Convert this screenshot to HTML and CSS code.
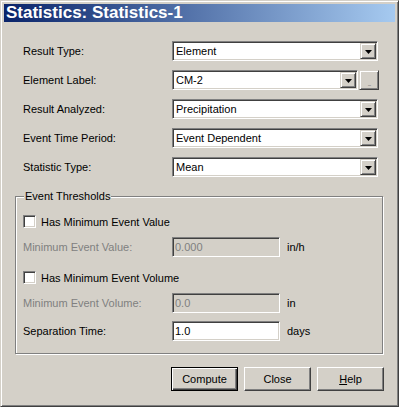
FILE: index.html
```html
<!DOCTYPE html>
<html>
<head>
<meta charset="utf-8">
<link rel="stylesheet" href="styles.css">
</head>
<body>
<div class="window">
  <div class="titlebar">Statistics: Statistics-1</div>
  <div class="form">
    <div class="row">
      <span class="label">Result Type:</span>
      <div class="combo wide"><span class="combo-text">Element</span><span class="drop"><svg width="7" height="4" viewBox="0 0 7 4"><polygon points="0,0 7,0 3.5,4" fill="#000"/></svg></span></div>
    </div>
    <div class="row">
      <span class="label">Element Label:</span>
      <div class="combo short"><span class="combo-text">CM-2</span><span class="drop"><svg width="7" height="4" viewBox="0 0 7 4"><polygon points="0,0 7,0 3.5,4" fill="#000"/></svg></span></div>
      <span class="ellipsis"><span class="dots">...</span></span>
    </div>
    <div class="row">
      <span class="label">Result Analyzed:</span>
      <div class="combo wide"><span class="combo-text">Precipitation</span><span class="drop"><svg width="7" height="4" viewBox="0 0 7 4"><polygon points="0,0 7,0 3.5,4" fill="#000"/></svg></span></div>
    </div>
    <div class="row">
      <span class="label">Event Time Period:</span>
      <div class="combo wide"><span class="combo-text">Event Dependent</span><span class="drop"><svg width="7" height="4" viewBox="0 0 7 4"><polygon points="0,0 7,0 3.5,4" fill="#000"/></svg></span></div>
    </div>
    <div class="row">
      <span class="label">Statistic Type:</span>
      <div class="combo wide"><span class="combo-text">Mean</span><span class="drop"><svg width="7" height="4" viewBox="0 0 7 4"><polygon points="0,0 7,0 3.5,4" fill="#000"/></svg></span></div>
    </div>
  </div>
  <div class="group">
    <div class="group-title">Event Thresholds</div>
    <div class="cb-row first"><span class="checkbox"></span><span class="cb-label">Has Minimum Event Value</span></div>
    <div class="row g1">
      <span class="label disabled">Minimum Event Value:</span>
      <span class="field off">0.000</span><span class="unit">in/h</span>
    </div>
    <div class="cb-row second"><span class="checkbox"></span><span class="cb-label">Has Minimum Event Volume</span></div>
    <div class="row g2">
      <span class="label disabled">Minimum Event Volume:</span>
      <span class="field off">0.0</span><span class="unit">in</span>
    </div>
    <div class="row g3">
      <span class="label">Separation Time:</span>
      <span class="field">1.0</span><span class="unit">days</span>
    </div>
  </div>
  <div class="buttons">
    <span class="btn default">Compute</span>
    <span class="btn">Close</span>
    <span class="btn"><u>H</u>elp</span>
  </div>
</div>
</body>
</html>
```

FILE: styles.css
```css
html, body {
  margin: 0;
  padding: 0;
  background: #d4d0c8;
}
.window {
  width: 399px;
  height: 407px;
  box-sizing: border-box;
  background: #d4d0c8;
  border: 1px solid;
  border-color: #d4d0c8 #404040 #404040 #d4d0c8;
  box-shadow: inset 1px 1px 0 #fff, inset -1px -1px 0 #808080;
  padding: 3px;
  font-family: "Liberation Sans", Arial, sans-serif;
  font-size: 11px;
  color: #000;
}
.titlebar {
  height: 18px;
  line-height: 18px;
  background: linear-gradient(to right, #0a246a, #a6caf0);
  color: #fff;
  font-weight: bold;
  font-size: 17px;
  padding-left: 2px;
  white-space: nowrap;
  overflow: hidden;
}
.form {
  margin-top: 19px;
  padding-left: 19px;
  display: flex;
  flex-direction: column;
  gap: 9px;
}
.row {
  display: flex;
  align-items: center;
  height: 20px;
}
.label {
  width: 149px;
  flex: none;
  white-space: nowrap;
}
.label.disabled {
  color: #808080;
}
.combo {
  height: 20px;
  box-sizing: border-box;
  border: 1px solid;
  border-color: #808080 #fff #fff #808080;
  box-shadow: inset 1px 1px 0 #404040, inset -1px -1px 0 #d4d0c8;
  background: #fff;
  display: flex;
  align-items: center;
  padding: 1px;
}
.combo.wide { width: 206px; }
.combo.short { width: 186px; }
.combo-text {
  flex: 1;
  padding-left: 2px;
  line-height: 16px;
}
.drop {
  width: 16px;
  height: 16px;
  box-sizing: border-box;
  background: #d4d0c8;
  border: 1px solid;
  border-color: #d4d0c8 #404040 #404040 #d4d0c8;
  box-shadow: inset 1px 1px 0 #fff, inset -1px -1px 0 #808080;
  display: flex;
  align-items: center;
  justify-content: center;
  padding-top: 1px;
}
.drop svg { display: block; }
.ellipsis {
  width: 20px;
  height: 20px;
  margin-left: 1px;
  box-sizing: border-box;
  background: #d4d0c8;
  border: 1px solid;
  border-color: #d4d0c8 #404040 #404040 #d4d0c8;
  box-shadow: inset 1px 1px 0 #fff, inset -1px -1px 0 #808080;
  display: flex;
  justify-content: center;
  align-items: flex-end;
}
.dots {
  font-size: 7px;
  line-height: 10px;
  color: #808080;
  letter-spacing: -1px;
}
.group {
  margin: 19px 0 0 11px;
  width: 368px;
  box-sizing: border-box;
  border: 1px solid #808080;
  box-shadow: 1px 1px 0 #fff, inset 1px 1px 0 #fff;
  padding: 0 0 12px 7px;
}
.group-title {
  margin: -8px 0 0 1px;
  padding: 0 1px;
  width: fit-content;
  line-height: 14px;
  background: #d4d0c8;
}
.cb-row {
  display: flex;
  align-items: center;
  height: 13px;
}
.cb-row.first { margin-top: 12px; }
.cb-row.second { margin-top: 14px; }
.row.g1 { margin-top: 9px; }
.row.g2 { margin-top: 9px; }
.row.g3 { margin-top: 8px; }
.checkbox {
  width: 13px;
  height: 13px;
  box-sizing: border-box;
  border: 1px solid;
  border-color: #808080 #fff #fff #808080;
  box-shadow: inset 1px 1px 0 #404040, inset -1px -1px 0 #d4d0c8;
  background: #fff;
  flex: none;
}
.cb-label {
  margin-left: 5px;
  white-space: nowrap;
}
.field {
  width: 108px;
  height: 20px;
  box-sizing: border-box;
  border: 1px solid;
  border-color: #808080 #fff #fff #808080;
  box-shadow: inset 1px 1px 0 #404040, inset -1px -1px 0 #d4d0c8;
  background: #fff;
  padding-left: 2px;
  line-height: 18px;
  flex: none;
}
.field.off {
  background: #d4d0c8;
  color: #808080;
}
.unit {
  margin-left: 7px;
}
.buttons {
  margin-top: 13px;
  display: flex;
  justify-content: flex-end;
  gap: 6px;
  padding-right: 11px;
}
.btn {
  width: 67px;
  height: 24px;
  box-sizing: border-box;
  background: #d4d0c8;
  border: 1px solid;
  border-color: #fff #404040 #404040 #fff;
  box-shadow: inset -1px -1px 0 #808080;
  display: flex;
  align-items: center;
  justify-content: center;
}
.btn.default {
  border: 1px solid #000;
  box-shadow: inset 1px 1px 0 #fff, inset -1px -1px 0 #404040, inset -2px -2px 0 #808080;
}
```
